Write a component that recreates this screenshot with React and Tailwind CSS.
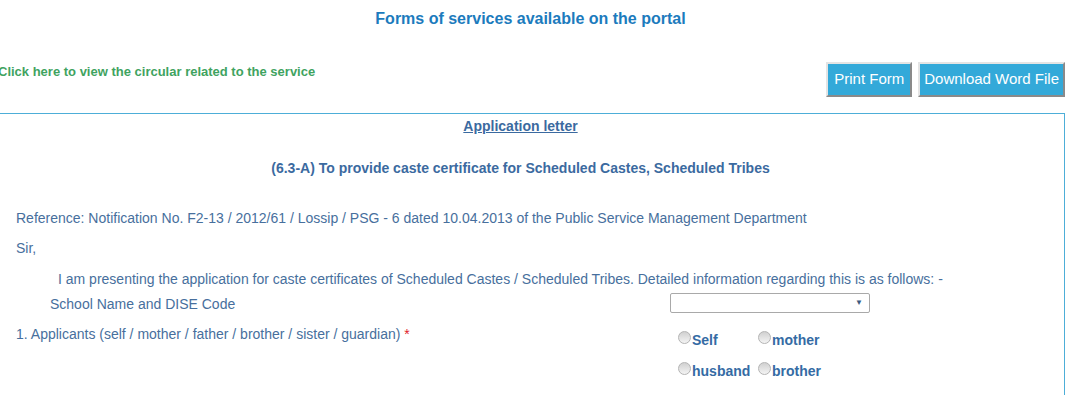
import React from "react";

const font = { fontFamily: '"Liberation Sans", Arial, sans-serif' };

function Radio({ label }) {
  return (
    <label className="flex items-center">
      <span className="w-[13px] h-[13px] rounded-full border border-[#b4b4b4] bg-gradient-to-b from-[#d0d0d0] to-[#f4f4f4] -translate-y-[3px]" />
      <span className="ml-px text-[14px] leading-[16px] font-bold text-[#346ba4]">{label}</span>
    </label>
  );
}

export default function App() {
  return (
    <div className="bg-white w-[1067px] h-[395px] overflow-hidden" style={font}>
      <div className="-ml-[4px] mr-[2px]">
        {/* header */}
        <h1 className="pt-[10px] text-center text-[16px] leading-[18px] font-bold text-[#1c7bbd]">
          Forms of services available on the portal
        </h1>

        <div className="flex items-start justify-between mt-[34px]">
          <a className="mt-[2px] text-[13px] leading-[15px] font-bold text-[#3fa35f] pl-[2px]">
            Click here to view the circular related to the service
          </a>
          <div className="flex gap-[6px]">
            <button className="h-[35px] px-[6px] bg-[#33a9d9] text-white text-[15px] border-2 border-[#e4e4e4] border-r-[#8a8a8a] border-b-[#8a8a8a]">
              Print Form
            </button>
            <button className="h-[35px] px-[4px] bg-[#33a9d9] text-white text-[15px] border-2 border-[#e4e4e4] border-r-[#8a8a8a] border-b-[#8a8a8a]">
              Download Word File
            </button>
          </div>
        </div>

        {/* letter box */}
        <div className="mt-[16px] border border-[#4daed8] h-[300px] pl-[4px] text-[#476f9d]">
          <p className="pt-[4px] pr-[24px] text-center text-[14px] leading-[16px] font-bold underline text-[#3b6aa0]">
            Application letter
          </p>
          <p className="mt-[26px] pr-[24px] text-center text-[14px] leading-[16px] font-bold text-[#3b6aa0]">
            (6.3-A) To provide caste certificate for Scheduled Castes, Scheduled Tribes
          </p>
          <div className="pl-[15px] text-[14px] leading-[16px]">
            <p className="mt-[34px]">
              Reference: Notification No. F2-13 / 2012/61 / Lossip / PSG - 6 dated 10.04.2013 of the Public Service Management Department
            </p>
            <p className="mt-[14px]">Sir,</p>
            <p className="mt-[15px] pl-[42px]">
              I am presenting the application for caste certificates of Scheduled Castes / Scheduled Tribes. Detailed information regarding this is as follows: -
            </p>
            <div className="flex items-center mt-[6px] h-[19px]">
              <span className="pl-[34px] w-[654px] translate-y-[1px]">School Name and DISE Code</span>
              <div className="w-[200px] h-[20px] border border-[#a9a9a9] rounded-[2px] flex items-center justify-end pr-[6px]">
                <span className="text-[8px] text-[#3d5a80]">▼</span>
              </div>
            </div>
            <div className="flex mt-[14px]">
              <span className="w-[662px]">
                1. Applicants (self / mother / father / brother / sister / guardian) <span className="text-[#e0202a]">*</span>
              </span>
              <div className="grid grid-cols-[80px_auto] gap-y-[15px] pt-[6px]">
                <Radio label="Self" />
                <Radio label="mother" />
                <Radio label="husband" />
                <Radio label="brother" />
              </div>
            </div>
          </div>
        </div>
      </div>
    </div>
  );
}
